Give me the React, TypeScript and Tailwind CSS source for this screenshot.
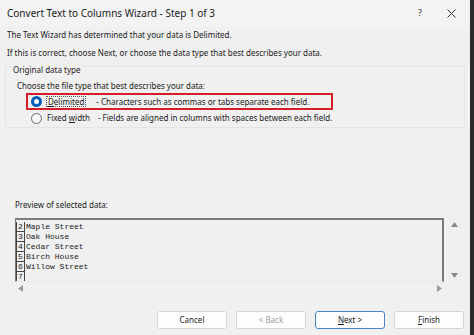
import React from "react";

const ui = { fontFamily: '"Noto Sans", "Open Sans", sans-serif' };
const mono = { fontFamily: '"Liberation Mono", "DejaVu Sans Mono", monospace' };

function Radio({ checked }: { checked: boolean }) {
  return checked ? (
    <span className="w-[11px] h-[11px] rounded-full bg-[#005fb8] flex items-center justify-center shrink-0">
      <span className="w-[5px] h-[5px] rounded-full bg-white" />
    </span>
  ) : (
    <span className="w-[11px] h-[11px] rounded-full border border-[#6b6b6b] bg-[#f6f6f6] shrink-0" />
  );
}

function Btn({ children, primary, disabled }: { children: React.ReactNode; primary?: boolean; disabled?: boolean }) {
  return (
    <div
      className={
        "w-[70px] h-[18px] rounded-[3px] bg-[#fdfdfd] flex items-center justify-center text-[8px] " +
        (primary ? "border border-[#4a84c8] " : "border border-[#d4d4d4] ") +
        (disabled ? "text-[#a0a0a0]" : "text-[#1b1b1b]")
      }
    >
      {children}
    </div>
  );
}

export default function App() {
  const rows = [
    ["2", "Maple Street"],
    ["3", "Oak House"],
    ["4", "Cedar Street"],
    ["5", "Birch House"],
    ["6", "Willow Street"],
    ["7", ""],
  ];
  return (
    <div className="w-[474px] h-[335px] bg-[#2b2b2b] flex overflow-hidden" style={ui}>
      <div className="w-[470px] h-[335px] bg-[#f0f0f0] text-[#1b1b1b] flex flex-col relative rounded-tl-[4px]">
        {/* title bar */}
        <div className="h-[26px] flex items-center pl-[7px] pr-[14px] bg-[#f3f3f3]">
          <span className="text-[10px] text-[#1b1b1b]">Convert Text to Columns Wizard - Step 1 of 3</span>
          <span className="ml-auto text-[9px] text-[#333] mr-[25px]">?</span>
          <svg width="9" height="9" viewBox="0 0 9 9">
            <path d="M0.5 0.5 L8.5 8.5 M8.5 0.5 L0.5 8.5" stroke="#333" strokeWidth="1" />
          </svg>
        </div>
        <div className="pl-[7px] text-[8px] leading-[10px] mt-[4px]">The Text Wizard has determined that your data is Delimited.</div>
        <div className="pl-[7px] text-[8px] leading-[10px] mt-[8px]">If this is correct, choose Next, or choose the data type that best describes your data.</div>

        {/* group box */}
        <div className="mx-[5px] mt-[8px] h-[62px] border border-[#e4e4e4] rounded-[2px] bg-[#f0f0f0] relative">
          <div className="absolute left-[6px] top-[-2px] text-[8px] leading-[10px] px-[1px] bg-[#f0f0f0]">Original data type</div>
          <div className="pl-[11px] pt-[14px] text-[8px] leading-[10px]">Choose the file type that best describes your data:</div>
          <div className="ml-[20px] mt-[2px] w-[307px] h-[17px] border-[2px] border-[#d41f2a] flex items-center pl-[3px] text-[8px]">
            <Radio checked />
            <span className="ml-[4px] px-[1px] border border-dotted border-[#555] leading-[9px]">
              <span className="underline">D</span>elimited
            </span>
            <span className="ml-[10px]">- Characters such as commas or tabs separate each field.</span>
          </div>
          <div className="ml-[20px] mt-[1px] h-[14px] flex items-center pl-[5px] text-[8px]">
            <Radio checked={false} />
            <span className="ml-[5px]">
              Fixed <span className="underline">w</span>idth
            </span>
            <span className="ml-[8px]">- Fields are aligned in columns with spaces between each field.</span>
          </div>
        </div>

        <div className="pl-[15px] mt-[72px] text-[8px] leading-[10px]">Preview of selected data:</div>

        {/* preview */}
        <div className="flex mt-[8px] ml-[15px]">
          <div className="w-[429px] h-[64px] border-t-[2px] border-l-[1px] border-r-[2px] border-[#7a7a7a] border-b border-b-[#e6e6e6] bg-[#f0f0f0] pt-[2px] overflow-hidden">
            {rows.map(([n, t]) => (
              <div key={n} className="flex h-[10px] text-[8px] leading-[10px]" style={mono}>
                <span className="w-[9px] border-l border-r border-b border-[#444] text-center text-[8px] leading-[9px]">{n}</span>
                <span className="pl-[1px] text-[#222]">{t}</span>
              </div>
            ))}
          </div>
          <div className="w-[20px] flex flex-col items-center justify-between py-[4px]">
            <svg width="7" height="5" viewBox="0 0 7 5"><path d="M0 5 L3.5 0 L7 5 Z" fill="#8a8a8a" /></svg>
            <svg width="7" height="5" viewBox="0 0 7 5"><path d="M0 0 L3.5 5 L7 0 Z" fill="#8a8a8a" /></svg>
          </div>
        </div>
        <div className="flex ml-[18px] w-[424px] justify-between mt-[3px]">
          <svg width="5" height="7" viewBox="0 0 5 7"><path d="M5 0 L0 3.5 L5 7 Z" fill="#9a9a9a" /></svg>
          <svg width="5" height="7" viewBox="0 0 5 7"><path d="M0 0 L5 3.5 L0 7 Z" fill="#9a9a9a" /></svg>
        </div>

        {/* buttons */}
        <div className="flex justify-end gap-[9px] pr-[6px] mt-auto mb-[6px]">
          <Btn>Cancel</Btn>
          <Btn disabled>&lt; Back</Btn>
          <Btn primary>
            <span><span className="underline">N</span>ext &gt;</span>
          </Btn>
          <Btn>
            <span><span className="underline">F</span>inish</span>
          </Btn>
        </div>
      </div>
    </div>
  );
}
